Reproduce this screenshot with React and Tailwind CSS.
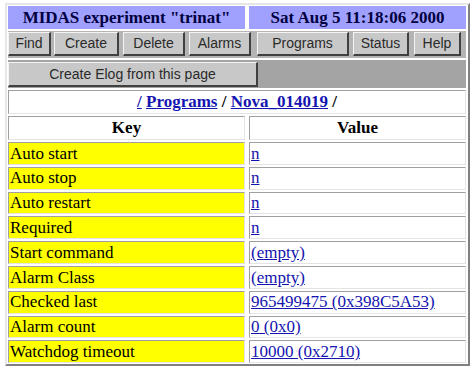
import React from 'react';

const rows = [
  ['Auto start', 'n'],
  ['Auto stop', 'n'],
  ['Auto restart', 'n'],
  ['Required', 'n'],
  ['Start command', '(empty)'],
  ['Alarm Class', '(empty)'],
  ['Checked last', '965499475 (0x398C5A53)'],
  ['Alarm count', '0 (0x0)'],
  ['Watchdog timeout', '10000 (0x2710)'],
];

const buttons = [
  { label: 'Find', cls: 'w-[43px]' },
  { label: 'Create', cls: 'w-[65px] ml-[3px]' },
  { label: 'Delete', cls: 'w-[62px] ml-[4px]' },
  { label: 'Alarms', cls: 'w-[62px] ml-[4px]' },
  { label: 'Programs', cls: 'w-[92px] ml-[6px]' },
  { label: 'Status', cls: 'w-[56px] ml-[4px]' },
  { label: 'Help', cls: 'w-[47px] ml-[5px]' },
];

const inset =
  'border border-t-[#a0a0a0] border-l-[#a0a0a0] border-b-[#e4e4e4] border-r-[#e4e4e4]';

const btn =
  "flex items-center justify-center bg-[#c8c8c8] text-[14px] text-[#2a2a2a] font-['Liberation_Sans',Arial,sans-serif] border-t border-l border-t-[#f4f4f4] border-l-[#f4f4f4] border-r-2 border-b-2 border-r-[#404040] border-b-[#404040]";

const Link = ({ children }) => (
  <a href="#" className="text-[#1414b0] underline">
    {children}
  </a>
);

export default function App() {
  return (
    <div className="min-h-[372px] bg-white pt-[3px] pl-[5px] font-['Liberation_Serif','Times_New_Roman',serif] text-[17px] text-black">
      <div className="w-[465px] border-2 border-t-[#e6e6e6] border-l-[#e6e6e6] border-r-[#808080] border-b-[#808080] pl-[1px] pr-[2px] pt-px pb-px">
        <div className="grid grid-cols-[237px_217px] gap-x-[4px] gap-y-[2px]">
          <div className="h-[23px] bg-[#a0a0ff] flex items-center justify-center font-bold text-[17px] text-[#000040]">
            MIDAS experiment "trinat"
          </div>
          <div className="h-[23px] bg-[#a0a0ff] flex items-center justify-center font-bold text-[17px] text-[#000040]">
            Sat Aug 5 11:18:06 2000
          </div>

          <div className="col-span-2 h-[27px] bg-[#b4b4b4] flex items-start pt-px">
            {buttons.map((b) => (
              <div key={b.label} className={`${btn} ${b.cls} h-[24px]`}>
                {b.label}
              </div>
            ))}
          </div>

          <div className="col-span-2 h-[28px] bg-[#a4a4a4] flex items-start pt-[2px]">
            <div className={`${btn} w-[250px] h-[25px]`}>Create Elog from this page</div>
          </div>

          <div className={`col-span-2 h-[24px] bg-white ${inset} flex items-center justify-center font-bold`}>
            <Link>/</Link>
            <span>&nbsp;</span>
            <Link>Programs</Link>
            <span>&nbsp;/&nbsp;</span>
            <Link>Nova_014019</Link>
            <span>&nbsp;/</span>
          </div>

          <div className={`h-[24px] bg-white ${inset} flex items-center justify-center font-bold`}>Key</div>
          <div className={`h-[24px] bg-white ${inset} flex items-center justify-center font-bold`}>Value</div>

          {rows.map(([k, v]) => (
            <React.Fragment key={k}>
              <div className={`h-[22.8px] bg-[#ffff00] ${inset} flex items-center pl-[1px]`}>{k}</div>
              <div className={`h-[22.8px] bg-white ${inset} flex items-center pl-[1px]`}>
                <Link>{v}</Link>
              </div>
            </React.Fragment>
          ))}
        </div>
      </div>
    </div>
  );
}
